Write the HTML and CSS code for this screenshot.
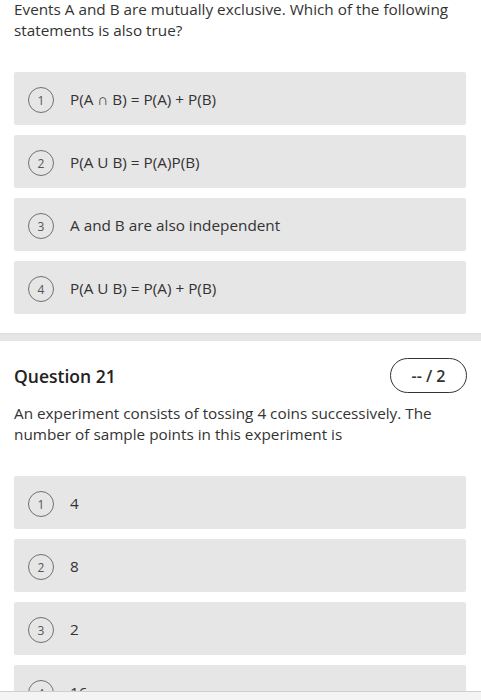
FILE: index.html
```html
<!DOCTYPE html>
<html>
<head>
<meta charset="utf-8">
<link rel="stylesheet" href="styles.css">
</head>
<body>
<div class="page">
  <section class="question first">
    <p class="prompt">Events A and B are mutually exclusive. Which of the following statements is also true?</p>
    <div class="options">
      <div class="option"><span class="num">1</span><span class="label">P(A ∩ B) = P(A) + P(B)</span></div>
      <div class="option"><span class="num">2</span><span class="label">P(A U B) = P(A)P(B)</span></div>
      <div class="option"><span class="num">3</span><span class="label">A and B are also independent</span></div>
      <div class="option"><span class="num">4</span><span class="label">P(A U B) = P(A) + P(B)</span></div>
    </div>
  </section>
  <div class="separator"></div>
  <section class="question">
    <div class="qhead">
      <h2 class="qtitle">Question 21</h2>
      <span class="score">-- / 2</span>
    </div>
    <p class="prompt">An experiment consists of tossing 4 coins successively. The number of sample points in this experiment is</p>
    <div class="options">
      <div class="option"><span class="num">1</span><span class="label">4</span></div>
      <div class="option"><span class="num">2</span><span class="label">8</span></div>
      <div class="option"><span class="num">3</span><span class="label">2</span></div>
      <div class="option"><span class="num">4</span><span class="label">16</span></div>
    </div>
  </section>
</div>
<div class="bottombar"></div>
</body>
</html>
```
FILE: styles.css
```css
html, body {
  margin: 0;
  padding: 0;
  background: #fff;
  overflow: hidden;
}
body {
  font-family: "Open Sans", "Liberation Sans", sans-serif;
  color: #333;
  width: 481px;
  height: 700px;
}
.page {
  display: flex;
  flex-direction: column;
}
.question {
  padding: 0 14px;
}
.prompt {
  margin: 0;
  font-size: 15.3px;
  line-height: 21px;
  color: #333;
}
.first .prompt {
  margin-top: -1px;
}
.options {
  display: flex;
  flex-direction: column;
  gap: 10px;
  margin-top: 31px;
  margin-right: 1px;
}
.first .options {
  margin-bottom: 19px;
}
.option {
  display: flex;
  align-items: center;
  height: 53px;
  background: #e6e6e6;
  border-radius: 2px;
  padding-left: 14px;
  box-sizing: border-box;
}
.num {
  width: 26px;
  height: 26px;
  box-sizing: border-box;
  border: 1.4px solid #707070;
  border-radius: 50%;
  display: flex;
  align-items: center;
  justify-content: center;
  font-size: 12px;
  color: #555;
  flex: none;
  margin-top: 3px;
}
.label {
  margin-left: 16px;
  font-size: 15.3px;
  color: #333;
}
.separator {
  height: 8px;
  background: #e5e5e5;
  border-top: 1px solid #dcdcdc;
  box-sizing: border-box;
}
.qhead {
  display: flex;
  align-items: center;
  justify-content: space-between;
  margin-top: 17px;
}
.qtitle {
  margin: 0;
  font-size: 17.5px;
  font-weight: 600;
  color: #222;
}
.score {
  width: 77px;
  height: 35px;
  box-sizing: border-box;
  border: 1.5px solid #333;
  border-radius: 18px;
  display: flex;
  align-items: center;
  justify-content: center;
  font-size: 16px;
  font-weight: 600;
  color: #333;
}
.question .qhead + .prompt {
  margin-top: 10px;
}
.bottombar {
  position: fixed;
  left: 0;
  right: 0;
  bottom: 0;
  height: 8px;
  background: #f4f4f4;
  border-top: 1px solid #cfcfcf;
}
```
